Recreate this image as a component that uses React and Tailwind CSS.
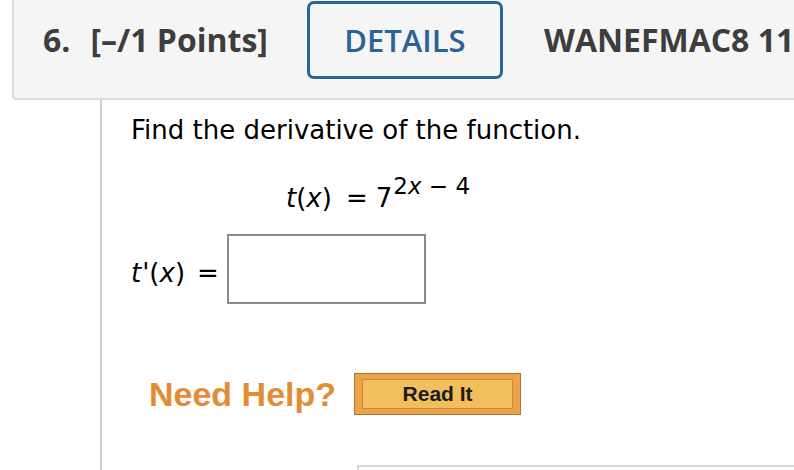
import React from 'react';

const ReadIt = () => (
  <button className="flex h-[42px] w-[167px] items-center justify-center border border-[#a87535] bg-[#eda247] p-[5px_7px]">
    <span className="flex h-full w-full items-center justify-center border border-[#c48a40] bg-[#f2bf5c] font-['Liberation_Sans',Arial,sans-serif] text-[21px] font-bold text-[#1c1c1c]">
      Read It
    </span>
  </button>
);

const App = () => {
  return (
    <div className="relative h-[470px] w-[794px] overflow-hidden bg-white">
      <header className="ml-[12px] flex h-[100px] items-start overflow-hidden whitespace-nowrap rounded-bl-[4px] border-b-2 border-l-2 border-[#dcdcdc] bg-[#f5f5f5] pl-[29px] font-['Open_Sans',sans-serif] font-bold text-[#3d3d3d]">
        <span className="mt-[20px] shrink-0 text-[32px] leading-[40px]">6.</span>
        <span className="ml-[20px] mt-[20px] shrink-0 text-[32px] leading-[40px]">[–/1 Points]</span>
        <div className="ml-[39px] mt-[1px] flex h-[78px] w-[196px] shrink-0 items-center justify-center rounded-[7px] border-[3px] border-[#2b6396]">
          <span className="text-[31px] font-semibold text-[#2b6396]">DETAILS</span>
        </div>
        <span className="ml-[41px] mt-[20px] shrink-0 text-[32px] leading-[40px]">WANEFMAC8 11</span>
      </header>

      <div className="flex h-[370px]">
        <div className="w-[102px] shrink-0 border-r-2 border-[#d0d0d0]" />
        <div className="flex-1 pl-[29px] font-['DejaVu_Sans',Verdana,sans-serif] text-black">
          <p className="mt-[14px] text-[26px] leading-[32px]">Find the derivative of the function.</p>

          <div className="ml-[155px] mt-[36px] flex items-baseline whitespace-nowrap text-[26px] leading-[32px]">
            <span>
              <i>t</i>(<i>x</i>)
            </span>
            <span className="ml-[14px]">=</span>
            <span className="ml-[8px]">7</span>
            <span className="relative -top-[13px] ml-[1px] text-[23px]">
              2<i>x</i> − 4
            </span>
          </div>

          <div className="mt-[19px] flex items-start">
            <span className="mt-[23px] whitespace-nowrap text-[26px] leading-[32px]">
              <i>t</i>
              <i className="ml-[1px]">'</i>(<i>x</i>)
            </span>
            <span className="ml-[12px] mt-[23px] text-[26px] leading-[32px]">=</span>
            <div className="ml-[8px] h-[70px] w-[199px] border-2 border-[#8a8a8a] bg-white" />
          </div>

          <div className="mt-[69px] flex items-center pl-[18px]">
            <span className="font-['Liberation_Sans',Arial,sans-serif] text-[34px] font-bold leading-[40px] text-[#e58a35]">
              Need Help?
            </span>
            <div className="ml-[18px]">
              <ReadIt />
            </div>
          </div>
        </div>
      </div>
      <div className="absolute left-[357px] top-[465px] h-[20px] w-[450px] border-l-2 border-t-2 border-[#d8d8d8]" />
    </div>
  );
};

export default App;
